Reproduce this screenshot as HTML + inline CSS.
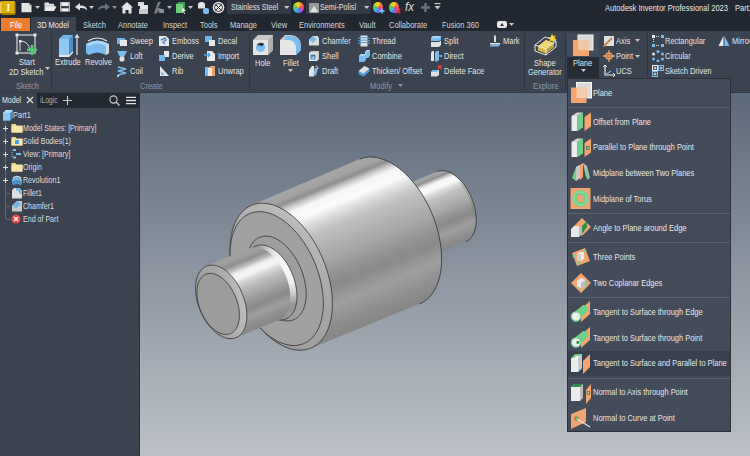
<!DOCTYPE html>
<html><head><meta charset="utf-8"><style>
html,body{margin:0;padding:0;width:750px;height:456px;overflow:hidden;background:#222832;}
.r{position:absolute;display:block;}
.t{position:absolute;white-space:nowrap;line-height:12px;height:12px;transform-origin:0 50%;font-family:"Liberation Sans",sans-serif;}
</style></head><body>
<div class="r" style="left:0px;top:0px;width:750px;height:31px;background:#222832;"></div>
<div class="r" style="left:0px;top:31px;width:750px;height:61px;background:#3b4351;"></div>
<div class="r" style="left:0px;top:92px;width:750px;height:1px;background:#343a45;"></div>
<div class="r" style="left:140px;top:93px;width:610px;height:363px;background:linear-gradient(#5d6a7b,#bcc1c7);"></div>
<div class="r" style="left:0px;top:93px;width:139px;height:363px;background:#3b4351;"></div>
<div class="r" style="left:139px;top:93px;width:1px;height:363px;background:#2a3039;"></div>
<div class="r" style="left:0px;top:93px;width:139px;height:15px;background:#232932;"></div>
<div class="r" style="left:0px;top:93px;width:37px;height:15px;background:#3b4351;"></div>
<svg class="r" style="left:0px;top:0px" width="16" height="16" viewBox="0 0 16 16"><rect x="0" y="1.5" width="2.5" height="12" fill="#e6c850"/><rect x="2" y="13" width="13" height="2" fill="#9a7c00"/><rect x="14.5" y="2" width="1" height="12" fill="#a88800"/><rect x="2.2" y="1" width="12.5" height="12.2" fill="#dcb000"/><text x="8.4" y="10.6" font-size="9.5" font-weight="bold" fill="#fff" text-anchor="middle" font-family="Liberation Serif">I</text></svg>
<svg class="r" style="left:20px;top:1px" width="13" height="13" viewBox="0 0 13 13"><path d="M1.5,2 h7.5 l2.5,2.5 v6.8 h-10z" fill="#e4e4e4"/><path d="M9,2 v2.5 h2.5z" fill="#9a9a9a"/></svg>
<svg class="r" style="left:35.0px;top:5.5px" width="5" height="3"><path d="M0,0 H5 L2.5,3z" fill="#c8c8c8"/></svg>
<svg class="r" style="left:43px;top:1px" width="14" height="13" viewBox="0 0 14 13"><path d="M1.5,1.5 h4 l1,1.2 h4.5 v2 h-9.5z" fill="#e2e2e2"/><path d="M1.5,10 v-5.5 h10.5 l-1.5,5.5z" fill="#d8d8d8"/><path d="M1.5,10 l2,-4.5 h10 l-2.5,4.5z" fill="#ececec"/></svg>
<svg class="r" style="left:59px;top:1px" width="12" height="12" viewBox="0 0 12 12"><rect x="1" y="1" width="10" height="9.6" fill="#b4b4b4"/><rect x="3" y="1.6" width="6" height="3.2" fill="#f0f0f0"/><rect x="2.2" y="5.2" width="7.6" height="2" fill="#30353e"/><rect x="3" y="7.6" width="6" height="2.6" fill="#f0f0f0"/></svg>
<svg class="r" style="left:74px;top:1px" width="14" height="13" viewBox="0 0 14 13"><path d="M1,6 l5,-4 v2.5 c4,0 7,1 7,5 c-1.5,-2 -3.5,-2.5 -7,-2.5 v2.5z" fill="#e0e0e0"/></svg>
<svg class="r" style="left:88.8px;top:5.5px" width="5" height="3"><path d="M0,0 H5 L2.5,3z" fill="#c8c8c8"/></svg>
<svg class="r" style="left:97px;top:1px" width="14" height="13" viewBox="0 0 14 13"><path d="M13,6 l-5,-4 v2.5 c-4,0 -7,1 -7,5 c1.5,-2 3.5,-2.5 7,-2.5 v2.5z" fill="#6a6f76"/></svg>
<svg class="r" style="left:112.0px;top:5.5px" width="5" height="3"><path d="M0,0 H5 L2.5,3z" fill="#8a8f96"/></svg>
<svg class="r" style="left:121px;top:1px" width="12" height="13" viewBox="0 0 12 13"><path d="M6,1 l6,5.5 h-1.5 v6 h-3 v-3.5 h-3 v3.5 h-3 v-6 h-1.5z" fill="#e4e4e4"/></svg>
<svg class="r" style="left:137px;top:1px" width="12" height="13" viewBox="0 0 12 13"><rect x="1" y="1" width="6" height="4" fill="#d8d8d8"/><rect x="3" y="4" width="8" height="5" fill="#e8e8e8"/><rect x="2" y="8" width="9" height="5" fill="#c8c8c8"/></svg>
<svg class="r" style="left:152px;top:1px" width="12" height="13" viewBox="0 0 12 13"><path d="M2,12 l4,-11 h3 l-3,6 h3 l-5,6z" fill="#777b82"/><rect x="7" y="8" width="5" height="4" fill="#8a8e94"/></svg>
<svg class="r" style="left:166.5px;top:5.5px" width="5" height="3"><path d="M0,0 H5 L2.5,3z" fill="#b8bcc2"/></svg>
<svg class="r" style="left:174px;top:1px" width="13" height="13" viewBox="0 0 13 13"><path d="M2,3 l3,-2 h6 v9 l-3,2 h-6z" fill="#3c9a4c"/><rect x="2" y="3" width="7" height="9" fill="#6ccf7a"/><path d="M8,6 l4,4 l-2,0 l1,3 l-1,0 l-1,-3 l-1,1z" fill="#e8e8e8"/></svg>
<svg class="r" style="left:188.2px;top:5.5px" width="5" height="3"><path d="M0,0 H5 L2.5,3z" fill="#c8c8c8"/></svg>
<svg class="r" style="left:197px;top:1px" width="13" height="13" viewBox="0 0 13 13"><ellipse cx="4.5" cy="3.5" rx="3.5" ry="2.5" fill="#e8e8e8"/><rect x="1" y="3.5" width="7" height="4" fill="#e0e0e0"/><rect x="6" y="7" width="6" height="6" rx="2" fill="#79bce8"/></svg>
<svg class="r" style="left:212px;top:1px" width="13" height="13" viewBox="0 0 13 13"><circle cx="6.5" cy="6.5" r="5.8" fill="#e8e8e8"/><circle cx="6.5" cy="6.5" r="4" fill="none" stroke="#333" stroke-width="1"/><path d="M3.5,3.5 L9.5,9.5 M9.5,3.5 L3.5,9.5" stroke="#333" stroke-width="1"/></svg>
<div class="r" style="left:227px;top:0px;width:64px;height:14px;background:#333a46;"></div>
<div class="t" style="left:231.0px;top:1.3px;font-size:9px;transform:scaleX(0.79);color:#e0e0e0;">Stainless Steel</div>
<svg class="r" style="left:283.9px;top:5.5px" width="5.5" height="3"><path d="M0,0 H5.5 L2.75,3z" fill="#c8c8c8"/></svg>
<div class="r" style="left:292.5px;top:1.8px;width:11.5px;height:11.5px;background:conic-gradient(from 0deg,#f8d030,#f08838,#e84a6a,#a850e0,#4f7ff0,#40c0d0,#50c060,#b8d830,#f8d030);border-radius:50%;"></div>
<div class="r" style="left:306px;top:0px;width:65px;height:14px;background:#333a46;"></div>
<svg class="r" style="left:309px;top:3px" width="10" height="10" viewBox="0 0 10 10"><rect x="0" y="0" width="10" height="10" rx="1" fill="#9a9a9a"/><path d="M1,9 l4,-6 l4,6z" fill="#e0e0e0"/></svg>
<div class="t" style="left:320.0px;top:1.3px;font-size:9px;transform:scaleX(0.8);color:#e0e0e0;">Semi-Polisl</div>
<svg class="r" style="left:364.2px;top:5.5px" width="5.5" height="3"><path d="M0,0 H5.5 L2.75,3z" fill="#c8c8c8"/></svg>
<div class="r" style="left:372.5px;top:2px;width:10.5px;height:10.5px;background:conic-gradient(from 0deg,#f8d030,#f08838,#e84a6a,#a850e0,#4f7ff0,#40c0d0,#50c060,#b8d830,#f8d030);border-radius:50%;"></div>
<svg class="r" style="left:379px;top:8px" width="6" height="6" viewBox="0 0 6 6"><path d="M0.5,3 h5 M3,0.5 v5" stroke="#7fd0ff" stroke-width="1.4"/></svg>
<div class="r" style="left:388.5px;top:2px;width:10.5px;height:10.5px;background:conic-gradient(from 0deg,#f8d030,#f08838,#e84a6a,#a850e0,#4f7ff0,#40c0d0,#50c060,#b8d830,#f8d030);border-radius:50%;"></div>
<svg class="r" style="left:395px;top:8px" width="6" height="6" viewBox="0 0 6 6"><path d="M0.8,0.8 l4.4,4.4 M5.2,0.8 l-4.4,4.4" stroke="#ff3a3a" stroke-width="1.4"/></svg>
<div class="t" style="left:404.5px;top:1.2px;font-size:12px;transform:scaleX(0.95);color:#dcdcdc;font-family:"Liberation Serif",serif;"><i>fx</i></div>
<svg class="r" style="left:420px;top:2px" width="11" height="11" viewBox="0 0 11 11"><path d="M5.5,1 v9 M1,5.5 h9" stroke="#6a6f76" stroke-width="2.5"/></svg>
<svg class="r" style="left:434px;top:3px" width="7" height="8" viewBox="0 0 7 8"><rect x="0.5" y="0" width="6" height="1.2" fill="#c8c8c8"/><path d="M0.5,3 h6 l-3,3.5z" fill="#c8c8c8"/></svg>
<div class="t" style="left:604.5px;top:2.0px;font-size:8.8px;transform:scaleX(0.855);color:#e8e8e8;">Autodesk Inventor Professional 2023</div>
<div class="t" style="left:734.5px;top:2.0px;font-size:8.8px;transform:scaleX(0.855);color:#e8e8e8;">Part1</div>
<div class="r" style="left:1px;top:18px;width:29px;height:13px;background:#ea7d2c;"></div>
<div class="t" style="left:9.5px;top:18.5px;font-size:9.0px;transform:scaleX(0.83);color:#ffffff;">File</div>
<div class="r" style="left:31px;top:17px;width:45px;height:14px;background:#3b4351;"></div>
<div class="t" style="left:36.7px;top:18.5px;font-size:9.0px;transform:scaleX(0.83);color:#eaeaea;">3D Model</div>
<div class="t" style="left:82.7px;top:18.5px;font-size:9.0px;transform:scaleX(0.83);color:#d2d4d8;">Sketch</div>
<div class="t" style="left:118.3px;top:18.5px;font-size:9.0px;transform:scaleX(0.83);color:#d2d4d8;">Annotate</div>
<div class="t" style="left:162.7px;top:18.5px;font-size:9.0px;transform:scaleX(0.83);color:#d2d4d8;">Inspect</div>
<div class="t" style="left:200.0px;top:18.5px;font-size:9.0px;transform:scaleX(0.83);color:#d2d4d8;">Tools</div>
<div class="t" style="left:230.0px;top:18.5px;font-size:9.0px;transform:scaleX(0.83);color:#d2d4d8;">Manage</div>
<div class="t" style="left:270.7px;top:18.5px;font-size:9.0px;transform:scaleX(0.83);color:#d2d4d8;">View</div>
<div class="t" style="left:299.3px;top:18.5px;font-size:9.0px;transform:scaleX(0.83);color:#d2d4d8;">Environments</div>
<div class="t" style="left:359.3px;top:18.5px;font-size:9.0px;transform:scaleX(0.83);color:#d2d4d8;">Vault</div>
<div class="t" style="left:389.3px;top:18.5px;font-size:9.0px;transform:scaleX(0.83);color:#d2d4d8;">Collaborate</div>
<div class="t" style="left:441.7px;top:18.5px;font-size:9.0px;transform:scaleX(0.83);color:#d2d4d8;">Fusion 360</div>
<svg class="r" style="left:497px;top:21px" width="10" height="7" viewBox="0 0 10 7"><rect x="0" y="0" width="10" height="7" rx="2" fill="#e8e8e8"/><path d="M3,5 l2,-3 l2,3z" fill="#333"/></svg>
<svg class="r" style="left:508.5px;top:23.1px" width="5" height="3"><path d="M0,0 H5 L2.5,3z" fill="#c8c8c8"/></svg>
<div class="r" style="left:51px;top:33px;width:1px;height:57px;background:#2e3440;"></div>
<div class="r" style="left:249px;top:33px;width:1px;height:57px;background:#2e3440;"></div>
<div class="r" style="left:524px;top:33px;width:1px;height:57px;background:#2e3440;"></div>
<div class="r" style="left:565px;top:33px;width:1px;height:57px;background:#2e3440;"></div>
<div class="r" style="left:647px;top:33px;width:1px;height:57px;background:#2e3440;"></div>
<div class="t" style="left:15.6px;top:79.5px;font-size:9.0px;transform:scaleX(0.83);color:#9097a0;">Sketch</div>
<div class="t" style="left:139.8px;top:79.5px;font-size:9.0px;transform:scaleX(0.83);color:#9097a0;">Create</div>
<div class="t" style="left:370.4px;top:79.5px;font-size:9.0px;transform:scaleX(0.83);color:#9097a0;">Modify</div>
<svg class="r" style="left:398.0px;top:84.0px" width="5" height="3"><path d="M0,0 H5 L2.5,3z" fill="#9097a0"/></svg>
<div class="t" style="left:532.8px;top:79.5px;font-size:9.0px;transform:scaleX(0.83);color:#9097a0;">Explore</div>
<svg class="r" style="left:15px;top:33px" width="24" height="23" viewBox="0 0 24 23"><rect x="2" y="2" width="18" height="18" fill="none" stroke="#d8d8d8" stroke-width="1.2"/><path d="M5,18 v-10 q9,0 10,10" fill="none" stroke="#d8d8d8" stroke-width="1"/><g fill="#e8e8e8"><rect x="0.5" y="0.5" width="3" height="3"/><rect x="18.5" y="0.5" width="3" height="3"/><rect x="0.5" y="18.5" width="3" height="3"/><rect x="4" y="7" width="2.5" height="2.5"/></g><path d="M17,12 v10 M12,17 h10" stroke="#4fd070" stroke-width="2.6"/></svg>
<div class="t" style="left:19.1px;top:56.4px;font-size:9.0px;transform:scaleX(0.83);color:#e4e4e4;">Start</div>
<div class="t" style="left:9.3px;top:66.0px;font-size:9.0px;transform:scaleX(0.83);color:#e4e4e4;">2D Sketch</div>
<svg class="r" style="left:44.5px;top:66.5px" width="5" height="3"><path d="M0,0 H5 L2.5,3z" fill="#c8c8c8"/></svg>
<svg class="r" style="left:57px;top:33px" width="24" height="24" viewBox="0 0 24 24"><path d="M2,6 l4,-4 h10 v16 l-4,4 h-10z" fill="#6fb5e8"/><path d="M2,6 h10 v16 h-10z" fill="#8fcaf5"/><path d="M12,6 l4,-4 v16 l-4,4z" fill="#4d90c8"/><path d="M2,22 h10 l4,-4 v2 l-4,4 h-10z" fill="#e8e8e8"/><path d="M20,22 v-19 M18,5 l2,-3 l2,3" stroke="#e8e8e8" stroke-width="1.2" fill="none"/></svg>
<div class="t" style="left:55.1px;top:56.4px;font-size:9.0px;transform:scaleX(0.83);color:#e4e4e4;">Extrude</div>
<svg class="r" style="left:85px;top:34px" width="25" height="22" viewBox="0 0 25 22"><path d="M3,7 q9.5,-6 19,0" fill="none" stroke="#e8e8e8" stroke-width="1.2"/><path d="M1,10 q11.5,-7 23,0 v9 l-3,2 q-9,-5 -17,0 l-3,-2z" fill="#79bdf0"/><path d="M21,10 l3,0 v9 l-3,2z" fill="#d8d8d8"/><path d="M1,10 q11.5,-7 23,0 l-3,2 q-8.5,-5 -17,0z" fill="#a8d8fa"/></svg>
<div class="t" style="left:84.5px;top:56.4px;font-size:9.0px;transform:scaleX(0.83);color:#e4e4e4;">Revolve</div>
<svg class="r" style="left:115.5px;top:34.7px" width="12" height="12" viewBox="0 0 12 12"><path d="M1,3 h7 l2,2 v4 h-9z" fill="#6fb5e8"/><rect x="4" y="5" width="7" height="6" fill="#e8e8e8"/></svg>
<div class="t" style="left:130.0px;top:34.7px;font-size:9.0px;transform:scaleX(0.83);color:#e4e4e4;">Sweep</div>
<svg class="r" style="left:115.5px;top:50px" width="12" height="12" viewBox="0 0 12 12"><path d="M1,1 h10 l-3,6 h-4z" fill="#79bdf0"/><circle cx="6" cy="9" r="2.6" fill="#e0e0e0"/></svg>
<div class="t" style="left:130.0px;top:50.0px;font-size:9.0px;transform:scaleX(0.83);color:#e4e4e4;">Loft</div>
<svg class="r" style="left:115.5px;top:65.3px" width="12" height="12" viewBox="0 0 12 12"><path d="M2,2 l8,2 l-8,2 l8,2 l-8,2" fill="none" stroke="#79bdf0" stroke-width="1.6"/><circle cx="2" cy="11" r="1" fill="#e8e8e8"/></svg>
<div class="t" style="left:130.0px;top:65.3px;font-size:9.0px;transform:scaleX(0.83);color:#e4e4e4;">Coil</div>
<svg class="r" style="left:157.5px;top:34.7px" width="12" height="12" viewBox="0 0 12 12"><path d="M1,1 h7 l3,3 v7 h-10z" fill="#e8e8e8"/><path d="M3,5 l4,-2 l1,2 l-3,2 l2,2" fill="none" stroke="#3a8ad8" stroke-width="1.4"/></svg>
<div class="t" style="left:171.6px;top:34.7px;font-size:9.0px;transform:scaleX(0.83);color:#e4e4e4;">Emboss</div>
<svg class="r" style="left:157.5px;top:50px" width="12" height="12" viewBox="0 0 12 12"><rect x="6" y="1" width="5" height="6" fill="#e8e8e8"/><rect x="1" y="5" width="6" height="6" fill="#6fb5e8"/></svg>
<div class="t" style="left:171.6px;top:50.0px;font-size:9.0px;transform:scaleX(0.83);color:#e4e4e4;">Derive</div>
<svg class="r" style="left:157.5px;top:65.3px" width="12" height="12" viewBox="0 0 12 12"><path d="M2,1 v10 h9z" fill="#e8e8e8"/><path d="M3,6 l4,4 h-4z" fill="#79bdf0"/></svg>
<div class="t" style="left:171.6px;top:65.3px;font-size:9.0px;transform:scaleX(0.83);color:#e4e4e4;">Rib</div>
<svg class="r" style="left:204px;top:34.7px" width="12" height="12" viewBox="0 0 12 12"><rect x="1" y="1" width="7" height="6" fill="#6fb5e8"/><rect x="5" y="5" width="6" height="6" fill="#e8e8e8"/></svg>
<div class="t" style="left:218.0px;top:34.7px;font-size:9.0px;transform:scaleX(0.83);color:#e4e4e4;">Decal</div>
<svg class="r" style="left:204px;top:50px" width="12" height="12" viewBox="0 0 12 12"><path d="M3,1 h5 l3,3 v7 h-8z" fill="#e8e8e8"/><path d="M0,5 h6 M4,3 l2,2 l-2,2" stroke="#4aa8e8" stroke-width="1.3" fill="none"/></svg>
<div class="t" style="left:218.0px;top:50.0px;font-size:9.0px;transform:scaleX(0.83);color:#e4e4e4;">Import</div>
<svg class="r" style="left:204px;top:65.3px" width="12" height="12" viewBox="0 0 12 12"><rect x="1" y="2" width="5" height="9" fill="#79bdf0"/><rect x="6" y="1" width="5" height="10" fill="#f0a060"/><rect x="4" y="3" width="4" height="8" fill="#e8e8e8"/></svg>
<div class="t" style="left:218.0px;top:65.3px;font-size:9.0px;transform:scaleX(0.83);color:#e4e4e4;">Unwrap</div>
<svg class="r" style="left:252px;top:34px" width="22" height="22" viewBox="0 0 22 22"><path d="M1,6 l5,-5 h15 v15 l-5,5 h-15z" fill="#c8c8c8"/><path d="M1,6 h15 v15 h-15z" fill="#e6e6e6"/><path d="M16,6 l5,-5 v15 l-5,5z" fill="#b0b0b0"/><ellipse cx="8.5" cy="13.5" rx="4.6" ry="4.6" fill="#79bdf0"/><path d="M5,11 a4.6,4.6 0 0 1 7,-1 l-1.5,2z" fill="#2a2f36"/></svg>
<div class="t" style="left:255.3px;top:56.5px;font-size:9.0px;transform:scaleX(0.83);color:#e4e4e4;">Hole</div>
<svg class="r" style="left:279px;top:34px" width="23" height="22" viewBox="0 0 23 22"><path d="M1,6 l5,-5 h6 a10,10 0 0 1 10,10 v5 l-5,5 h-16z" fill="#c8c8c8"/><path d="M1,6 h9 a7,7 0 0 1 7,7 v8 h-16z" fill="#e6e6e6"/><path d="M7,2 h5 a10,10 0 0 1 10,10 v4 l-5,5 v-8 a7,7 0 0 0 -7,-7 h-4z" fill="#79bdf0"/></svg>
<div class="t" style="left:282.5px;top:56.5px;font-size:9.0px;transform:scaleX(0.83);color:#e4e4e4;">Fillet</div>
<svg class="r" style="left:287.9px;top:69.0px" width="5" height="3"><path d="M0,0 H5 L2.5,3z" fill="#c8c8c8"/></svg>
<svg class="r" style="left:308px;top:34.7px" width="12" height="12" viewBox="0 0 12 12"><path d="M1,4.5 l4,-3.5 h5 v1 l1,1 v7.5 h-10z" fill="#dcdcdc"/><path d="M1,4.5 l4,-3.5 l4,3 l-4,4z" fill="#79bdf0"/></svg>
<div class="t" style="left:322.0px;top:34.7px;font-size:9.0px;transform:scaleX(0.83);color:#e4e4e4;">Chamfer</div>
<svg class="r" style="left:308px;top:50px" width="12" height="12" viewBox="0 0 12 12"><path d="M1,3 l2,-2 h8 v8 l-2,2 h-8z" fill="#d0d0d0"/><rect x="1" y="3" width="8" height="8" fill="#e8e8e8"/><rect x="2.5" y="4.5" width="5" height="5" fill="#3a78b8"/><rect x="3.5" y="6.5" width="3" height="3" fill="#8fcaf5"/></svg>
<div class="t" style="left:322.0px;top:50.0px;font-size:9.0px;transform:scaleX(0.83);color:#e4e4e4;">Shell</div>
<svg class="r" style="left:308px;top:65.3px" width="12" height="12" viewBox="0 0 12 12"><path d="M1,5 l3,-4 h2 v10.5 h-5z" fill="#e4e4e4"/><path d="M5,10.5 l2,-8 l3,1 l-2,7z" fill="#79bdf0"/><path d="M8,0.5 l2.5,3" stroke="#e4e4e4" stroke-width="1"/></svg>
<div class="t" style="left:322.0px;top:65.3px;font-size:9.0px;transform:scaleX(0.83);color:#e4e4e4;">Draft</div>
<svg class="r" style="left:358.4px;top:34.7px" width="12" height="12" viewBox="0 0 12 12"><rect x="2.5" y="0.5" width="7" height="11" fill="#e4e4e4"/><path d="M0,3.5 q6,-2 12,0 M0,6 q6,-2 12,0 M0,8.5 q6,-2 12,0" stroke="#4a9ee0" stroke-width="1.2" fill="none"/></svg>
<div class="t" style="left:372.0px;top:34.7px;font-size:9.0px;transform:scaleX(0.83);color:#e4e4e4;">Thread</div>
<svg class="r" style="left:358.4px;top:50px" width="12" height="12" viewBox="0 0 12 12"><path d="M1,6 l2,-2 h4 v-2 l2,-2 h3 v6 l-2,2 h-2 v2 l-2,2 h-5z" fill="#79bdf0"/><path d="M3,4 h4 v-2 l2,-2 h3 l-2,2 h-2 v2 l-2,2 h-5z" fill="#a8d8fa"/></svg>
<div class="t" style="left:372.0px;top:50.0px;font-size:9.0px;transform:scaleX(0.83);color:#e4e4e4;">Combine</div>
<svg class="r" style="left:358.4px;top:65.3px" width="12" height="12" viewBox="0 0 12 12"><path d="M0.5,7 l6,-5 l5,2.5 v2 l-6,5 l-5,-2.5z" fill="#4d9fdc"/><path d="M0.5,6 l6,-5 l5,2.5 l-6,5z" fill="#e0e0e0"/></svg>
<div class="t" style="left:372.0px;top:65.3px;font-size:9.0px;transform:scaleX(0.83);color:#e4e4e4;">Thicken/ Offset</div>
<svg class="r" style="left:430.4px;top:34.7px" width="12" height="12" viewBox="0 0 12 12"><path d="M1,3 l2,-2 h8 v3.5 l-2,1.5 h-8z" fill="#79bdf0"/><path d="M1,3 l2,-2 h8 l-2,2z" fill="#a8d8fa"/><path d="M1,7 h8 l2,-1.5 v4.5 l-2,2 h-8z" fill="#e4e4e4"/></svg>
<div class="t" style="left:443.6px;top:34.7px;font-size:9.0px;transform:scaleX(0.83);color:#e4e4e4;">Split</div>
<svg class="r" style="left:430.4px;top:50px" width="12" height="12" viewBox="0 0 12 12"><path d="M1,11 v-8 q0,-2 2,-2 h1 v10z" fill="#e4e4e4"/><path d="M5,2 l2,-1 h2 v9 l-2,1.5 h-2z" fill="#79bdf0"/><path d="M9.5,6 h2.5" stroke="#e4e4e4" stroke-width="1.3"/></svg>
<div class="t" style="left:443.6px;top:50.0px;font-size:9.0px;transform:scaleX(0.83);color:#e4e4e4;">Direct</div>
<svg class="r" style="left:430.4px;top:65.3px" width="12" height="12" viewBox="0 0 12 12"><path d="M1,7 l2,-2 h6 v5 l-2,1.5 h-6z" fill="#e0e0e0"/><path d="M1,7 l2,-2 h6 l-2,2z" fill="#79bdf0"/><path d="M8,0.5 l3.5,3.5 M11.5,0.5 l-3.5,3.5" stroke="#ff4040" stroke-width="1.3"/></svg>
<div class="t" style="left:443.6px;top:65.3px;font-size:9.0px;transform:scaleX(0.83);color:#e4e4e4;">Delete Face</div>
<svg class="r" style="left:488.5px;top:34.7px" width="12" height="12" viewBox="0 0 12 12"><path d="M6,0.5 v6.5" stroke="#e8e8e8" stroke-width="1.8"/><path d="M1,8 h10 v1.5 h-10z" fill="#e8e8e8"/><path d="M0.5,11.5 l2,-2 h9 l-2,2z" fill="#79bdf0"/></svg>
<div class="t" style="left:502.6px;top:34.7px;font-size:9.0px;transform:scaleX(0.83);color:#e4e4e4;">Mark</div>
<svg class="r" style="left:533px;top:33px" width="24" height="23" viewBox="0 0 24 23"><path d="M5,13 l8,-6 l8,3 v4 l-8,6.5 l-8,-3z" fill="#d8b840"/><path d="M5,13 l8,-6 l8,3 l-8,6z" fill="#ecd470"/><path d="M13,16 l8,-6 v4 l-8,6.5z" fill="#c0a030"/><path d="M2,12 l10,-8 l11,4 v6 l-10,8 l-11,-4z M2,12 l11,4 l10,-8 M13,16 v6" fill="none" stroke="#e8e8e8" stroke-width="1"/><path d="M19,0.5 l1.2,2.8 l2.8,-1 l-1.6,2.5 l2.4,1.8 l-3,0.3 l-0.2,3 l-1.6,-2.5 l-2.6,1.4 l1,-2.8 l-2.6,-1.5 l3,-0.4z" fill="#ffd83a"/></svg>
<div class="t" style="left:534.2px;top:56.5px;font-size:9.0px;transform:scaleX(0.83);color:#e4e4e4;">Shape</div>
<div class="t" style="left:528.2px;top:66.2px;font-size:9.0px;transform:scaleX(0.83);color:#e4e4e4;">Generator</div>
<div class="r" style="left:566.7px;top:32.7px;width:32.6px;height:24.3px;background:#434b59;"></div>
<div class="r" style="left:566.7px;top:57px;width:32.6px;height:21.5px;background:#262c36;"></div>
<svg class="r" style="left:572px;top:34px" width="23" height="23" viewBox="0 0 23 23"><rect x="6" y="1" width="15" height="15" fill="#d9d9d9"/><rect x="6" y="1" width="15" height="15" fill="none" stroke="#f4f4f4" stroke-width="1"/><rect x="1" y="6" width="16" height="16" fill="#f2a56f"/><rect x="6" y="6" width="11" height="10" fill="#f0c8a6"/></svg>
<div class="t" style="left:573.4px;top:56.5px;font-size:9.0px;transform:scaleX(0.83);color:#e4e4e4;">Plane</div>
<svg class="r" style="left:580.5px;top:69.0px" width="5" height="3"><path d="M0,0 H5 L2.5,3z" fill="#c8c8c8"/></svg>
<svg class="r" style="left:603px;top:34.7px" width="12" height="12" viewBox="0 0 12 12"><rect x="1" y="1" width="10" height="10" fill="#e0e0e0"/><path d="M0,12 l9,-9" stroke="#c88050" stroke-width="1.8"/></svg>
<div class="t" style="left:616.0px;top:34.7px;font-size:9.0px;transform:scaleX(0.83);color:#e4e4e4;">Axis</div>
<svg class="r" style="left:635.0px;top:39.2px" width="5" height="3"><path d="M0,0 H5 L2.5,3z" fill="#c8c8c8"/></svg>
<svg class="r" style="left:603px;top:50px" width="12" height="12" viewBox="0 0 12 12"><path d="M6,0 v12 M0,6 h12" stroke="#f0a060" stroke-width="1.3"/><circle cx="6" cy="6" r="3" fill="none" stroke="#f0a060" stroke-width="1.6"/></svg>
<div class="t" style="left:616.0px;top:50.0px;font-size:9.0px;transform:scaleX(0.83);color:#e4e4e4;">Point</div>
<svg class="r" style="left:635.0px;top:54.5px" width="5" height="3"><path d="M0,0 H5 L2.5,3z" fill="#c8c8c8"/></svg>
<svg class="r" style="left:603px;top:65.3px" width="12" height="12" viewBox="0 0 12 12"><path d="M2,0 v10 h10" stroke="#e8e8e8" stroke-width="1.2" fill="none"/><path d="M2,10 l6,-4" stroke="#79bdf0" stroke-width="1.2"/><path d="M0,2 l2,-2 l2,2 M10,8 l2,2 l-2,2" stroke="#e8e8e8" fill="none"/></svg>
<div class="t" style="left:616.0px;top:65.3px;font-size:9.0px;transform:scaleX(0.83);color:#e4e4e4;">UCS</div>
<svg class="r" style="left:652px;top:34.7px" width="12" height="12" viewBox="0 0 12 12"><g fill="#79bdf0"><rect x="0" y="0" width="3" height="3"/><rect x="9" y="0" width="3" height="3"/><rect x="0" y="9" width="3" height="3"/><rect x="9" y="9" width="3" height="3"/></g><rect x="0" y="0" width="3" height="3" fill="#e8e8e8"/><path d="M4,1.5 h4 M4,10.5 h4 M1.5,4 v4" stroke="#e8e8e8" stroke-dasharray="1,1"/></svg>
<div class="t" style="left:665.3px;top:34.7px;font-size:9.0px;transform:scaleX(0.83);color:#e4e4e4;">Rectangular</div>
<svg class="r" style="left:652px;top:50px" width="12" height="12" viewBox="0 0 12 12"><g fill="#79bdf0"><circle cx="6" cy="1.5" r="1.5"/><circle cx="10.5" cy="4" r="1.5"/><circle cx="10.5" cy="9" r="1.5"/><circle cx="6" cy="11" r="1.5"/><circle cx="1.5" cy="9" r="1.5"/></g><circle cx="1.5" cy="4" r="1.5" fill="#e8e8e8"/></svg>
<div class="t" style="left:665.3px;top:50.0px;font-size:9.0px;transform:scaleX(0.83);color:#e4e4e4;">Circular</div>
<svg class="r" style="left:652px;top:65.3px" width="12" height="12" viewBox="0 0 12 12"><rect x="0.5" y="0.5" width="5" height="5" fill="none" stroke="#e8e8e8"/><rect x="6.5" y="0.5" width="5" height="5" fill="none" stroke="#79bdf0"/><rect x="0.5" y="6.5" width="5" height="5" fill="none" stroke="#79bdf0"/><path d="M3,1.5 v3 M1.5,3 h3 M9,1.5 v3 M7.5,3 h3 M3,7.5 v3 M1.5,9 h3" stroke="#e8e8e8"/></svg>
<div class="t" style="left:665.3px;top:65.3px;font-size:9.0px;transform:scaleX(0.83);color:#e4e4e4;">Sketch Driven</div>
<svg class="r" style="left:717.5px;top:34.7px" width="12" height="12" viewBox="0 0 12 12"><path d="M5.5,1 v10 h-5z" fill="#e8e8e8"/><path d="M6.5,1 v10 h5z" fill="#79bdf0"/></svg>
<div class="t" style="left:731.7px;top:34.7px;font-size:9.0px;transform:scaleX(0.83);color:#e4e4e4;">Mirror</div>
<div class="t" style="left:2.0px;top:94.4px;font-size:9.0px;transform:scaleX(0.78);color:#e8e8e8;">Model</div>
<svg class="r" style="left:26px;top:96px" width="8" height="8" viewBox="0 0 8 8"><path d="M1,1 l6,6 M7,1 l-6,6" stroke="#e0e0e0" stroke-width="1.2"/></svg>
<div class="t" style="left:39.6px;top:94.4px;font-size:9.0px;transform:scaleX(0.75);color:#aab0b8;">iLogic</div>
<svg class="r" style="left:63px;top:96px" width="9" height="9" viewBox="0 0 9 9"><path d="M4.5,0 v9 M0,4.5 h9" stroke="#c8c8c8" stroke-width="1.2"/></svg>
<svg class="r" style="left:109px;top:95px" width="11" height="11" viewBox="0 0 11 11"><circle cx="4.5" cy="4.5" r="3.6" fill="none" stroke="#d0d0d0" stroke-width="1.1"/><path d="M7,7 l3.5,3.5" stroke="#d0d0d0" stroke-width="1.3"/></svg>
<svg class="r" style="left:126px;top:96px" width="10" height="9" viewBox="0 0 10 9"><path d="M0,1.3 h10 M0,4.5 h10 M0,7.7 h10" stroke="#e0e0e0" stroke-width="1.3"/></svg>
<div class="r" style="left:5px;top:120px;width:1px;height:99px;background:#5f6670;"></div>
<div class="r" style="left:6px;top:193px;width:4px;height:1px;background:#5f6670;"></div>
<div class="r" style="left:6px;top:206px;width:4px;height:1px;background:#5f6670;"></div>
<div class="r" style="left:6px;top:219px;width:4px;height:1px;background:#5f6670;"></div>
<svg class="r" style="left:2px;top:109px" width="12" height="12" viewBox="0 0 12 12"><path d="M1,4 l3,-3 h7 v7.5 l-3,3 h-7z" fill="#5aa8e0"/><path d="M1,4 h7 v7.5 h-7z" fill="#8fcaf5"/><path d="M8,4 l3,-3 v7.5 l-3,3z" fill="#4d90c8"/><path d="M1,4 l3,-3 h7 l-3,3z" fill="#b5dcf8"/></svg>
<div class="t" style="left:12.7px;top:109.0px;font-size:9.0px;transform:scaleX(0.83);color:#dcdee2;">Part1</div>
<svg class="r" style="left:2px;top:125px" width="7" height="7" viewBox="0 0 7 7"><path d="M3.5,1 v5 M1,3.5 h5" stroke="#d8d8d8" stroke-width="1"/></svg>
<svg class="r" style="left:2px;top:138px" width="7" height="7" viewBox="0 0 7 7"><path d="M3.5,1 v5 M1,3.5 h5" stroke="#d8d8d8" stroke-width="1"/></svg>
<svg class="r" style="left:2px;top:151px" width="7" height="7" viewBox="0 0 7 7"><path d="M3.5,1 v5 M1,3.5 h5" stroke="#d8d8d8" stroke-width="1"/></svg>
<svg class="r" style="left:2px;top:164px" width="7" height="7" viewBox="0 0 7 7"><path d="M3.5,1 v5 M1,3.5 h5" stroke="#d8d8d8" stroke-width="1"/></svg>
<svg class="r" style="left:2px;top:177px" width="7" height="7" viewBox="0 0 7 7"><path d="M3.5,1 v5 M1,3.5 h5" stroke="#d8d8d8" stroke-width="1"/></svg>
<svg class="r" style="left:11px;top:123px" width="12" height="10" viewBox="0 0 12 10"><path d="M0.5,1 h4 l1,1.5 h6 v7 h-11z" fill="#f2dc8a"/><rect x="0.5" y="3" width="11" height="6.5" fill="#f7e6a4"/></svg>
<div class="t" style="left:23.3px;top:122.0px;font-size:9.0px;transform:scaleX(0.785);color:#dcdee2;">Model States: [Primary]</div>
<svg class="r" style="left:11px;top:136px" width="12" height="10" viewBox="0 0 12 10"><path d="M0.5,1 h4 l1,1.5 h6 v7 h-11z" fill="#f2dc8a"/><rect x="0.5" y="3" width="11" height="6.5" fill="#f7e6a4"/><rect x="4" y="4" width="4" height="4" fill="#4d9fdc"/></svg>
<div class="t" style="left:23.3px;top:135.0px;font-size:9.0px;transform:scaleX(0.785);color:#dcdee2;">Solid Bodies(1)</div>
<svg class="r" style="left:11px;top:149px" width="12" height="10" viewBox="0 0 12 10"><path d="M1,1 v8" stroke="#c8c8c8" stroke-width="0.8" stroke-dasharray="1,1"/><rect x="2" y="0" width="3" height="2" fill="#79bdf0"/><rect x="5" y="4" width="5" height="2" fill="#79bdf0"/><rect x="2" y="7.5" width="3" height="2" fill="#79bdf0"/></svg>
<div class="t" style="left:23.3px;top:148.0px;font-size:9.0px;transform:scaleX(0.785);color:#dcdee2;">View: [Primary]</div>
<svg class="r" style="left:11px;top:162px" width="12" height="10" viewBox="0 0 12 10"><path d="M0.5,1 h4 l1,1.5 h6 v7 h-11z" fill="#f2dc8a"/><rect x="0.5" y="3" width="11" height="6.5" fill="#f7e6a4"/></svg>
<div class="t" style="left:23.3px;top:161.0px;font-size:9.0px;transform:scaleX(0.785);color:#dcdee2;">Origin</div>
<svg class="r" style="left:11px;top:174px" width="12" height="12" viewBox="0 0 12 12"><path d="M1,5 q5,-4 10,0 v3 q-5,-3 -10,0z" fill="#6fb5e8"/><path d="M1,8 q5,-3 10,0 v2 l-1.5,1.5 q-3.5,-2.5 -7,0 l-1.5,-1.5z" fill="#4d90c8"/><path d="M2,4 q4,-3.5 8,0" stroke="#e0e0e0" stroke-width="1.2" fill="none"/></svg>
<div class="t" style="left:23.3px;top:174.0px;font-size:9.0px;transform:scaleX(0.785);color:#dcdee2;">Revolution1</div>
<svg class="r" style="left:11px;top:187px" width="12" height="12" viewBox="0 0 12 12"><path d="M1,11.5 v-7 q0,-3.5 3.5,-3.5 h2 q4.5,0 4.5,4.5 v6z" fill="#dedede"/><path d="M5,1 q6,0 6,6 h-2.5 q0,-3.5 -3.5,-3.5z" fill="#6fb5e8"/></svg>
<div class="t" style="left:23.3px;top:187.0px;font-size:9.0px;transform:scaleX(0.785);color:#dcdee2;">Fillet1</div>
<svg class="r" style="left:11px;top:200px" width="12" height="12" viewBox="0 0 12 12"><path d="M1,11.5 v-6 l5,-4.5 h5 v10.5z" fill="#c8c8c8"/><path d="M1,5.5 l5,-4.5 l4,3 l-5,4.5z" fill="#6fb5e8"/></svg>
<div class="t" style="left:23.3px;top:200.0px;font-size:9.0px;transform:scaleX(0.785);color:#dcdee2;">Chamfer1</div>
<svg class="r" style="left:11px;top:214px" width="10" height="10" viewBox="0 0 10 10"><circle cx="5" cy="5" r="4.6" fill="#e84848"/><path d="M3,3 l4,4 M7,3 l-4,4" stroke="#fff" stroke-width="1.3"/></svg>
<div class="t" style="left:23.3px;top:213.0px;font-size:9.0px;transform:scaleX(0.785);color:#dcdee2;">End of Part</div>
<svg class="r" style="left:140px;top:92px" width="610" height="364" viewBox="0 0 610 364"><defs><linearGradient id="gFl" gradientUnits="userSpaceOnUse" x1="240" y1="330" x2="320" y2="220"><stop offset="0" stop-color="#9c9c9c"/><stop offset="0.55" stop-color="#a6a6a6"/><stop offset="1" stop-color="#c2c2c2"/></linearGradient><linearGradient id="gCh" gradientUnits="userSpaceOnUse" x1="196" y1="300" x2="248" y2="290"><stop offset="0" stop-color="#9a9a9a"/><stop offset="0.5" stop-color="#a8a8a8"/><stop offset="1" stop-color="#c4c4c4"/></linearGradient><linearGradient id="gF" gradientUnits="userSpaceOnUse" x1="229.49" y1="256.58" x2="259.11" y2="328.09"><stop offset="0" stop-color="#a2a2a2"/><stop offset="0.06" stop-color="#9e9e9e"/><stop offset="0.12" stop-color="#8e8e8e"/><stop offset="0.18" stop-color="#b8b8b8"/><stop offset="0.235" stop-color="#f0f0f0"/><stop offset="0.3" stop-color="#f6f6f6"/><stop offset="0.36" stop-color="#d8d8d8"/><stop offset="0.45" stop-color="#bababa"/><stop offset="0.55" stop-color="#a8a8a8"/><stop offset="0.65" stop-color="#939393"/><stop offset="0.72" stop-color="#8a8a8a"/><stop offset="0.82" stop-color="#9e9e9e"/><stop offset="0.9" stop-color="#909090"/><stop offset="1" stop-color="#868686"/></linearGradient><linearGradient id="gB" gradientUnits="userSpaceOnUse" x1="302.48" y1="184.56" x2="361.65" y2="327.39"><stop offset="0" stop-color="#a6a6a6"/><stop offset="0.04" stop-color="#a2a2a2"/><stop offset="0.07" stop-color="#8e8e8e"/><stop offset="0.1" stop-color="#c4c4c4"/><stop offset="0.135" stop-color="#f6f6f6"/><stop offset="0.2" stop-color="#fafafa"/><stop offset="0.26" stop-color="#dadada"/><stop offset="0.33" stop-color="#c0c0c0"/><stop offset="0.42" stop-color="#b2b2b2"/><stop offset="0.5" stop-color="#a8a8a8"/><stop offset="0.6" stop-color="#949494"/><stop offset="0.68" stop-color="#8a8a8a"/><stop offset="0.8" stop-color="#9e9e9e"/><stop offset="0.9" stop-color="#909090"/><stop offset="1" stop-color="#868686"/></linearGradient><linearGradient id="gR" gradientUnits="userSpaceOnUse" x1="405.33" y1="184.61" x2="434.34" y2="254.64"><stop offset="0" stop-color="#a6a6a6"/><stop offset="0.04" stop-color="#a2a2a2"/><stop offset="0.07" stop-color="#8e8e8e"/><stop offset="0.1" stop-color="#c4c4c4"/><stop offset="0.135" stop-color="#f6f6f6"/><stop offset="0.2" stop-color="#fafafa"/><stop offset="0.26" stop-color="#dadada"/><stop offset="0.33" stop-color="#c0c0c0"/><stop offset="0.42" stop-color="#b2b2b2"/><stop offset="0.5" stop-color="#a8a8a8"/><stop offset="0.6" stop-color="#949494"/><stop offset="0.68" stop-color="#8a8a8a"/><stop offset="0.8" stop-color="#9e9e9e"/><stop offset="0.9" stop-color="#909090"/><stop offset="1" stop-color="#868686"/></linearGradient><radialGradient id="gC" gradientUnits="userSpaceOnUse" cx="290" cy="266" r="38"><stop offset="0" stop-color="#fafafa"/><stop offset="0.45" stop-color="#f0f0f0"/><stop offset="0.75" stop-color="#c8c8c8"/><stop offset="1" stop-color="#989898"/></radialGradient></defs><g transform="translate(-140,-92)"><path d="M402.65,267.76 L401.56,268.16 L400.43,268.46 L399.27,268.66 L398.07,268.76 L396.85,268.77 L395.61,268.67 L394.34,268.48 L393.06,268.19 L391.77,267.80 L390.46,267.32 L389.15,266.74 L387.84,266.06 L386.53,265.30 L385.22,264.45 L383.92,263.51 L382.63,262.48 L381.35,261.38 L380.10,260.19 L378.87,258.94 L377.66,257.60 L376.48,256.21 L375.33,254.74 L374.22,253.22 L373.15,251.64 L372.11,250.01 L371.12,248.33 L370.18,246.61 L369.29,244.85 L368.45,243.05 L367.66,241.23 L366.93,239.39 L366.26,237.53 L365.64,235.65 L365.09,233.77 L364.61,231.88 L364.18,230.00 L363.82,228.12 L363.53,226.26 L363.31,224.41 L363.15,222.59 L363.07,220.79 L363.05,219.03 L363.10,217.31 L363.22,215.62 L363.41,213.99 L363.66,212.41 L363.98,210.88 L364.37,209.41 L364.82,208.00 L365.34,206.67 L365.92,205.40 L366.56,204.21 L367.26,203.10 L368.02,202.07 L368.83,201.12 L369.70,200.26 L370.62,199.49 L371.58,198.81 L372.59,198.23 L373.64,197.73 L436.65,171.64 L437.74,171.24 L438.87,170.94 L440.03,170.74 L441.23,170.64 L442.45,170.63 L443.69,170.73 L444.95,170.92 L446.24,171.21 L447.53,171.60 L448.83,172.08 L450.15,172.66 L451.46,173.34 L452.77,174.10 L454.08,174.95 L455.38,175.89 L456.67,176.92 L457.95,178.02 L459.20,179.20 L460.43,180.46 L461.64,181.79 L462.82,183.19 L463.97,184.66 L465.08,186.18 L466.15,187.76 L467.19,189.39 L468.17,191.07 L469.12,192.79 L470.01,194.55 L470.85,196.34 L471.64,198.17 L472.37,200.01 L473.04,201.87 L473.65,203.75 L474.21,205.63 L474.69,207.52 L475.12,209.40 L475.47,211.28 L475.77,213.14 L475.99,214.99 L476.14,216.81 L476.23,218.60 L476.25,220.37 L476.20,222.09 L476.08,223.77 L475.89,225.41 L475.64,226.99 L475.32,228.52 L474.93,229.99 L474.47,231.40 L473.96,232.73 L473.38,234.00 L472.73,235.19 L472.03,236.30 L471.28,237.33 L470.46,238.28 L469.60,239.14 L468.68,239.91 L467.72,240.59 L466.71,241.17 L465.66,241.67 Z" fill="url(#gR)"/><path d="M436.65,171.64 L437.74,171.24 L438.87,170.94 L440.03,170.74 L441.23,170.64 L442.45,170.63 L443.69,170.73 L444.95,170.92 L446.24,171.21 L447.53,171.60 L448.83,172.08 L450.15,172.66 L451.46,173.34 L452.77,174.10 L454.08,174.95 L455.38,175.89 L456.67,176.92 L457.95,178.02 L459.20,179.20 L460.43,180.46 L461.64,181.79 L462.82,183.19 L463.97,184.66 L465.08,186.18 L466.15,187.76 L467.19,189.39 L468.17,191.07 L469.12,192.79 L470.01,194.55 L470.85,196.34 L471.64,198.17 L472.37,200.01 L473.04,201.87 L473.65,203.75 L474.21,205.63 L474.69,207.52 L475.12,209.40 L475.47,211.28 L475.77,213.14 L475.99,214.99 L476.14,216.81 L476.23,218.60 L476.25,220.37 L476.20,222.09 L476.08,223.77 L475.89,225.41 L475.64,226.99 L475.32,228.52 L474.93,229.99 L474.47,231.40 L473.96,232.73 L473.38,234.00 L472.73,235.19 L472.03,236.30 L471.28,237.33 L470.46,238.28 L469.60,239.14 L468.68,239.91 L467.72,240.59 L466.71,241.17 L465.66,241.67" stroke="#303030" stroke-width="0.8" fill="none"/><path d="M460.09,182.76 L460.48,183.21 L460.87,183.67 L461.25,184.14 L461.63,184.61 L462.01,185.09 L462.38,185.58 L462.75,186.07 L463.11,186.57 L463.47,187.08 L463.83,187.59 L464.18,188.11 L464.53,188.63 L464.87,189.16 L465.21,189.70 L465.55,190.24 L465.88,190.79 L466.20,191.34 L466.52,191.89 L466.83,192.45 L467.14,193.02 L467.45,193.59 L467.74,194.16 L468.04,194.74 L468.32,195.32 L468.61,195.90 L468.88,196.49 L469.15,197.08 L469.42,197.68 L469.68,198.27 L469.93,198.87 L470.17,199.48 L470.41,200.08 L470.65,200.69 L470.87,201.30 L471.09,201.91 L471.31,202.52 L471.52,203.14 L471.72,203.75 L471.91,204.37 L472.10,204.98 L472.28,205.60 L472.45,206.22 L472.62,206.84 L472.78,207.46 L472.93,208.08 L473.08,208.70 L473.22,209.31 L473.35,209.93 L473.48,210.55 L473.59,211.16 L473.70,211.78 L473.81,212.39 L473.90,213.00 L473.99,213.61 L474.07,214.22 L474.14,214.83 L474.21,215.43 L474.27,216.03 L474.32,216.63 L474.36,217.22" stroke="#666" stroke-width="0.4" fill="none"/><path d="M310.81,348.13 L308.58,348.93 L306.28,349.54 L303.91,349.95 L301.48,350.16 L298.99,350.17 L296.45,349.98 L293.87,349.58 L291.26,348.99 L288.62,348.20 L285.96,347.21 L283.28,346.03 L280.60,344.66 L277.93,343.10 L275.26,341.36 L272.61,339.45 L269.98,337.36 L267.38,335.10 L264.82,332.69 L262.30,330.12 L259.84,327.40 L257.43,324.55 L255.10,321.57 L252.83,318.46 L250.64,315.24 L248.53,311.91 L246.51,308.49 L244.59,304.97 L242.77,301.39 L241.06,297.73 L239.45,294.02 L237.96,290.25 L236.59,286.46 L235.34,282.63 L234.21,278.79 L233.22,274.94 L232.36,271.10 L231.63,267.27 L231.03,263.47 L230.58,259.71 L230.26,255.99 L230.08,252.33 L230.04,248.73 L230.15,245.22 L230.39,241.78 L230.77,238.45 L231.29,235.22 L231.95,232.10 L232.74,229.11 L233.67,226.24 L234.72,223.51 L235.91,220.93 L237.21,218.51 L238.64,216.24 L240.19,214.14 L241.84,212.21 L243.61,210.45 L245.48,208.88 L247.44,207.49 L249.50,206.30 L251.65,205.29 L359.80,159.09 L362.05,158.27 L364.39,157.65 L366.79,157.24 L369.25,157.03 L371.77,157.02 L374.34,157.21 L376.95,157.61 L379.60,158.21 L382.28,159.02 L384.97,160.02 L387.68,161.21 L390.40,162.60 L393.11,164.18 L395.81,165.94 L398.50,167.88 L401.16,170.00 L403.79,172.28 L406.39,174.73 L408.94,177.33 L411.43,180.08 L413.87,182.97 L416.24,185.99 L418.53,189.14 L420.75,192.40 L422.88,195.77 L424.93,199.24 L426.87,202.80 L428.72,206.43 L430.46,210.14 L432.08,213.90 L433.59,217.71 L434.98,221.56 L436.25,225.43 L437.39,229.32 L438.40,233.22 L439.27,237.11 L440.01,240.99 L440.61,244.84 L441.07,248.65 L441.39,252.42 L441.57,256.13 L441.61,259.77 L441.51,263.33 L441.26,266.81 L440.87,270.19 L440.35,273.46 L439.68,276.62 L438.88,279.65 L437.94,282.55 L436.87,285.31 L435.67,287.93 L434.35,290.39 L432.90,292.68 L431.34,294.81 L429.66,296.77 L427.87,298.54 L425.98,300.14 L423.99,301.54 L421.90,302.75 L419.73,303.77 Z" fill="url(#gB)"/><path d="M359.80,159.09 L362.05,158.27 L364.39,157.65 L366.79,157.24 L369.25,157.03 L371.77,157.02 L374.34,157.21 L376.95,157.61 L379.60,158.21 L382.28,159.02 L384.97,160.02 L387.68,161.21 L390.40,162.60 L393.11,164.18 L395.81,165.94 L398.50,167.88 L401.16,170.00 L403.79,172.28 L406.39,174.73 L408.94,177.33 L411.43,180.08 L413.87,182.97 L416.24,185.99 L418.53,189.14 L420.75,192.40 L422.88,195.77 L424.93,199.24 L426.87,202.80 L428.72,206.43 L430.46,210.14 L432.08,213.90 L433.59,217.71 L434.98,221.56 L436.25,225.43 L437.39,229.32 L438.40,233.22 L439.27,237.11 L440.01,240.99 L440.61,244.84 L441.07,248.65 L441.39,252.42 L441.57,256.13 L441.61,259.77 L441.51,263.33 L441.26,266.81 L440.87,270.19 L440.35,273.46 L439.68,276.62 L438.88,279.65 L437.94,282.55 L436.87,285.31 L435.67,287.93 L434.35,290.39 L432.90,292.68 L431.34,294.81 L429.66,296.77 L427.87,298.54 L425.98,300.14 L423.99,301.54 L421.90,302.75 L419.73,303.77" stroke="#303030" stroke-width="0.8" fill="none"/><path d="M310.81,348.13 L312.61,347.30 L314.34,346.35 L316.01,345.26 L317.62,344.04 L319.15,342.69 L320.62,341.21 L322.01,339.62 L323.32,337.90 L324.55,336.07 L325.70,334.12 L326.76,332.07 L327.74,329.91 L328.63,327.64 L329.42,325.28 L330.13,322.83 L330.75,320.29 L331.26,317.67 L331.69,314.97 L332.02,312.20 L332.25,309.36 L332.38,306.46 L332.42,303.50 L332.36,300.49 L332.20,297.43 L331.95,294.34 L331.60,291.21 L331.15,288.05 L330.61,284.87 L329.97,281.68 L329.24,278.48 L328.42,275.27 L327.51,272.07 L326.51,268.87 L325.43,265.70 L324.26,262.54 L323.01,259.41 L321.68,256.31 L320.27,253.25 L318.79,250.23 L317.24,247.27 L315.62,244.36 L313.93,241.51 L312.18,238.73 L310.37,236.02 L308.51,233.39 L306.59,230.84 L304.63,228.38 L302.62,226.02 L300.57,223.74 L298.49,221.57 L296.37,219.51 L294.22,217.55 L292.05,215.70 L289.85,213.97 L287.65,212.37 L285.42,210.88 L283.19,209.52 L280.96,208.28 L278.73,207.18 L276.50,206.21 L274.28,205.37 L272.08,204.67 L269.89,204.11 L267.72,203.68 L265.58,203.40 L263.47,203.25 L261.39,203.24 L259.35,203.37 L257.35,203.65 L255.40,204.06 L253.50,204.61 L251.65,205.29 L249.85,206.12 L248.12,207.07 L246.45,208.16 L244.84,209.38 L243.31,210.73 L241.84,212.21 L240.45,213.80 L239.14,215.52 L237.91,217.35 L236.76,219.30 L235.70,221.35 L234.72,223.51 L233.83,225.78 L233.04,228.14 L232.33,230.59 L231.71,233.13 L231.20,235.75 L230.77,238.45 L230.44,241.22 L230.21,244.06 L230.08,246.96 L230.04,249.92 L230.10,252.93 L230.26,255.99 L230.51,259.08 L230.86,262.21 L231.31,265.37 L231.85,268.55 L232.49,271.74 L233.22,274.94 L234.04,278.15 L234.95,281.35 L235.95,284.55 L237.03,287.73 L238.20,290.88 L239.45,294.02 L240.78,297.11 L242.19,300.17 L243.67,303.19 L245.22,306.15 L246.84,309.06 L248.53,311.91 L250.28,314.69 L252.09,317.40 L253.95,320.03 L255.87,322.58 L257.83,325.04 L259.84,327.40 L261.89,329.68 L263.97,331.85 L266.09,333.91 L268.24,335.87 L270.41,337.72 L272.61,339.45 L274.81,341.05 L277.04,342.54 L279.27,343.90 L281.50,345.14 L283.73,346.24 L285.96,347.21 L288.18,348.05 L290.38,348.75 L292.57,349.31 L294.74,349.74 L296.88,350.02 L298.99,350.17 L301.07,350.18 L303.11,350.05 L305.10,349.77 L307.06,349.36 L308.96,348.81 Z" fill="url(#gFl)" stroke="#303030" stroke-width="0.8"/><path d="M303.64,343.63 L305.28,342.88 L306.86,342.01 L308.38,341.01 L309.84,339.90 L311.24,338.67 L312.57,337.33 L313.84,335.88 L315.03,334.31 L316.15,332.64 L317.20,330.87 L318.17,329.00 L319.06,327.03 L319.87,324.97 L320.60,322.82 L321.24,320.59 L321.80,318.28 L322.27,315.89 L322.66,313.43 L322.96,310.91 L323.17,308.32 L323.29,305.68 L323.32,302.98 L323.27,300.24 L323.12,297.46 L322.89,294.64 L322.57,291.79 L322.17,288.91 L321.67,286.02 L321.09,283.11 L320.43,280.20 L319.68,277.28 L318.85,274.36 L317.94,271.45 L316.96,268.55 L315.89,265.68 L314.75,262.82 L313.54,260.00 L312.26,257.22 L310.91,254.47 L309.50,251.77 L308.02,249.12 L306.48,246.53 L304.89,244.00 L303.24,241.53 L301.55,239.13 L299.80,236.81 L298.01,234.57 L296.18,232.42 L294.32,230.35 L292.42,228.37 L290.49,226.49 L288.53,224.70 L286.55,223.02 L284.56,221.45 L282.55,219.98 L280.52,218.63 L278.49,217.39 L276.46,216.27 L274.42,215.26 L272.40,214.38 L270.37,213.62 L268.37,212.98 L266.37,212.46 L264.40,212.08 L262.45,211.82 L260.53,211.68 L258.64,211.67 L256.78,211.80 L254.96,212.04 L253.18,212.42 L251.45,212.92 L249.76,213.54 L248.13,214.29 L246.55,215.17 L245.03,216.16 L243.56,217.27 L242.17,218.50 L240.83,219.84 L239.57,221.29 L238.37,222.86 L237.25,224.53 L236.21,226.30 L235.24,228.17 L234.35,230.14 L233.54,232.20 L232.81,234.35 L232.17,236.58 L231.61,238.89 L231.13,241.28 L230.75,243.74 L230.45,246.26 L230.24,248.85 L230.12,251.49 L230.08,254.19 L230.14,256.93 L230.28,259.71 L230.51,262.53 L230.83,265.38 L231.24,268.26 L231.73,271.15 L232.31,274.06 L232.98,276.97 L233.72,279.89 L234.55,282.81 L235.46,285.72 L236.45,288.62 L237.51,291.49 L238.65,294.35 L239.87,297.17 L241.15,299.95 L242.50,302.70 L243.91,305.40 L245.39,308.05 L246.92,310.64 L248.52,313.17 L250.16,315.64 L251.86,318.04 L253.60,320.36 L255.39,322.60 L257.22,324.75 L259.09,326.82 L260.99,328.80 L262.92,330.68 L264.87,332.47 L266.85,334.15 L268.85,335.72 L270.86,337.19 L272.88,338.54 L274.91,339.78 L276.95,340.90 L278.98,341.91 L281.01,342.79 L283.03,343.55 L285.04,344.19 L287.03,344.71 L289.01,345.09 L290.96,345.36 L292.88,345.49 L294.77,345.50 L296.63,345.38 L298.45,345.13 L300.22,344.75 L301.96,344.25 Z" fill="#a0a0a0" stroke="#303030" stroke-width="0.8"/><path d="M293.73,319.70 L294.77,319.22 L295.77,318.67 L296.73,318.04 L297.66,317.34 L298.54,316.56 L299.39,315.71 L300.19,314.79 L300.95,313.80 L301.66,312.74 L302.32,311.62 L302.93,310.43 L303.50,309.19 L304.01,307.88 L304.47,306.52 L304.88,305.10 L305.23,303.64 L305.53,302.13 L305.78,300.57 L305.97,298.97 L306.10,297.33 L306.18,295.66 L306.20,293.95 L306.16,292.21 L306.07,290.45 L305.93,288.66 L305.72,286.86 L305.47,285.04 L305.15,283.20 L304.79,281.36 L304.37,279.51 L303.89,277.66 L303.37,275.82 L302.79,273.97 L302.17,272.14 L301.49,270.32 L300.77,268.51 L300.00,266.72 L299.19,264.96 L298.34,263.22 L297.44,261.50 L296.50,259.83 L295.53,258.18 L294.52,256.58 L293.48,255.02 L292.40,253.50 L291.30,252.03 L290.16,250.61 L289.01,249.24 L287.82,247.93 L286.62,246.68 L285.40,245.49 L284.16,244.36 L282.91,243.29 L281.64,242.30 L280.37,241.37 L279.08,240.51 L277.80,239.72 L276.51,239.01 L275.22,238.38 L273.94,237.82 L272.66,237.33 L271.38,236.93 L270.12,236.60 L268.87,236.36 L267.64,236.19 L266.42,236.11 L265.22,236.10 L264.04,236.18 L262.89,236.34 L261.76,236.57 L260.66,236.89 L259.60,237.29 L258.56,237.76 L257.56,238.31 L256.60,238.94 L255.67,239.65 L254.78,240.43 L253.94,241.28 L253.14,242.20 L252.38,243.19 L251.67,244.25 L251.01,245.37 L250.39,246.55 L249.83,247.80 L249.32,249.11 L248.86,250.47 L248.45,251.88 L248.10,253.35 L247.80,254.86 L247.55,256.42 L247.36,258.02 L247.23,259.66 L247.15,261.33 L247.13,263.04 L247.16,264.77 L247.26,266.54 L247.40,268.32 L247.60,270.13 L247.86,271.95 L248.18,273.78 L248.54,275.62 L248.96,277.47 L249.44,279.32 L249.96,281.17 L250.54,283.01 L251.16,284.85 L251.84,286.67 L252.56,288.48 L253.33,290.27 L254.14,292.03 L254.99,293.77 L255.89,295.48 L256.83,297.16 L257.80,298.80 L258.81,300.41 L259.85,301.97 L260.93,303.49 L262.03,304.96 L263.16,306.38 L264.32,307.74 L265.51,309.05 L266.71,310.31 L267.93,311.50 L269.17,312.63 L270.42,313.69 L271.69,314.69 L272.96,315.62 L274.24,316.48 L275.53,317.26 L276.82,317.97 L278.11,318.61 L279.39,319.17 L280.67,319.65 L281.95,320.06 L283.21,320.38 L284.46,320.63 L285.69,320.79 L286.91,320.88 L288.11,320.88 L289.29,320.81 L290.44,320.65 L291.57,320.41 L292.66,320.09 Z" fill="#9e9e9e" stroke="#303030" stroke-width="0.8"/><path d="M285.94,318.92 L286.86,318.50 L287.74,318.01 L288.60,317.45 L289.42,316.83 L290.20,316.14 L290.95,315.39 L291.66,314.57 L292.33,313.69 L292.96,312.76 L293.55,311.76 L294.09,310.71 L294.59,309.61 L295.04,308.45 L295.45,307.25 L295.81,306.00 L296.13,304.70 L296.39,303.36 L296.61,301.98 L296.78,300.56 L296.90,299.11 L296.96,297.63 L296.98,296.11 L296.95,294.58 L296.87,293.02 L296.74,291.43 L296.56,289.84 L296.33,288.22 L296.06,286.60 L295.73,284.97 L295.36,283.33 L294.94,281.69 L294.47,280.06 L293.96,278.42 L293.41,276.80 L292.81,275.18 L292.17,273.58 L291.49,272.00 L290.78,270.44 L290.02,268.90 L289.22,267.38 L288.40,265.90 L287.53,264.44 L286.64,263.02 L285.72,261.64 L284.76,260.29 L283.79,258.99 L282.78,257.73 L281.76,256.52 L280.71,255.36 L279.64,254.25 L278.56,253.20 L277.46,252.20 L276.35,251.25 L275.23,250.37 L274.10,249.55 L272.97,248.79 L271.83,248.09 L270.69,247.46 L269.55,246.90 L268.41,246.40 L267.28,245.97 L266.15,245.62 L265.03,245.33 L263.92,245.11 L262.83,244.96 L261.75,244.89 L260.69,244.88 L259.65,244.95 L258.63,245.09 L257.63,245.30 L256.66,245.58 L255.71,245.93 L254.79,246.35 L253.91,246.84 L253.05,247.40 L252.23,248.02 L251.45,248.71 L250.70,249.47 L249.99,250.28 L249.32,251.16 L248.69,252.10 L248.10,253.09 L247.56,254.14 L247.06,255.24 L246.61,256.40 L246.20,257.61 L245.84,258.86 L245.52,260.16 L245.26,261.50 L245.04,262.88 L244.87,264.29 L244.76,265.74 L244.69,267.23 L244.67,268.74 L244.70,270.28 L244.78,271.84 L244.91,273.42 L245.09,275.02 L245.32,276.63 L245.59,278.25 L245.92,279.89 L246.29,281.52 L246.71,283.16 L247.18,284.80 L247.69,286.43 L248.24,288.06 L248.84,289.67 L249.48,291.27 L250.16,292.85 L250.88,294.42 L251.63,295.96 L252.43,297.47 L253.25,298.96 L254.12,300.41 L255.01,301.83 L255.93,303.22 L256.89,304.56 L257.87,305.86 L258.87,307.12 L259.90,308.33 L260.94,309.49 L262.01,310.60 L263.09,311.66 L264.19,312.66 L265.30,313.60 L266.42,314.48 L267.55,315.31 L268.68,316.07 L269.82,316.76 L270.96,317.39 L272.10,317.96 L273.24,318.45 L274.38,318.88 L275.50,319.24 L276.62,319.53 L277.73,319.74 L278.82,319.89 L279.90,319.97 L280.96,319.97 L282.00,319.90 L283.03,319.76 L284.02,319.55 L285.00,319.27 Z" fill="url(#gC)" stroke="#303030" stroke-width="0.8"/><path d="M236.01,337.65 L234.89,338.06 L233.74,338.36 L232.56,338.57 L231.34,338.67 L230.09,338.68 L228.82,338.58 L227.53,338.38 L226.22,338.09 L224.90,337.69 L223.57,337.20 L222.23,336.60 L220.89,335.92 L219.55,335.14 L218.21,334.27 L216.88,333.31 L215.57,332.26 L214.27,331.13 L212.98,329.92 L211.72,328.64 L210.49,327.28 L209.29,325.85 L208.12,324.36 L206.98,322.80 L205.88,321.19 L204.83,319.52 L203.82,317.81 L202.86,316.05 L201.95,314.25 L201.09,312.42 L200.28,310.56 L199.54,308.68 L198.85,306.78 L198.22,304.86 L197.66,302.94 L197.16,301.01 L196.73,299.09 L196.37,297.18 L196.07,295.27 L195.84,293.39 L195.68,291.53 L195.59,289.69 L195.57,287.89 L195.62,286.13 L195.75,284.41 L195.94,282.74 L196.20,281.13 L196.53,279.57 L196.92,278.07 L197.39,276.63 L197.92,275.27 L198.51,273.98 L199.16,272.76 L199.88,271.63 L200.65,270.57 L201.48,269.61 L202.37,268.73 L203.30,267.94 L204.28,267.25 L205.32,266.65 L206.39,266.15 L249.81,248.16 L250.93,247.76 L252.08,247.45 L253.27,247.24 L254.48,247.14 L255.73,247.14 L257.00,247.23 L258.29,247.43 L259.60,247.73 L260.92,248.12 L262.25,248.62 L263.59,249.21 L264.94,249.90 L266.28,250.68 L267.61,251.55 L268.94,252.51 L270.26,253.55 L271.56,254.68 L272.84,255.89 L274.10,257.17 L275.33,258.53 L276.54,259.96 L277.71,261.46 L278.84,263.01 L279.94,264.63 L280.99,266.29 L282.00,268.01 L282.96,269.76 L283.88,271.56 L284.73,273.39 L285.54,275.25 L286.28,277.13 L286.97,279.03 L287.60,280.95 L288.16,282.87 L288.66,284.80 L289.09,286.72 L289.46,288.64 L289.75,290.54 L289.98,292.43 L290.14,294.29 L290.23,296.12 L290.25,297.92 L290.20,299.68 L290.08,301.40 L289.88,303.07 L289.62,304.69 L289.29,306.25 L288.90,307.75 L288.43,309.18 L287.91,310.55 L287.31,311.84 L286.66,313.05 L285.94,314.19 L285.17,315.24 L284.34,316.21 L283.46,317.09 L282.52,317.87 L281.54,318.57 L280.51,319.17 L279.43,319.67 Z" fill="url(#gF)"/><path d="M236.01,337.65 L236.91,337.24 L237.78,336.76 L238.61,336.22 L239.42,335.61 L240.19,334.93 L240.92,334.19 L241.61,333.39 L242.27,332.53 L242.89,331.62 L243.46,330.64 L243.99,329.61 L244.48,328.53 L244.93,327.40 L245.33,326.22 L245.68,324.99 L245.99,323.72 L246.25,322.41 L246.46,321.06 L246.63,319.67 L246.74,318.25 L246.81,316.79 L246.83,315.31 L246.80,313.80 L246.72,312.27 L246.59,310.72 L246.42,309.16 L246.19,307.58 L245.92,305.99 L245.60,304.39 L245.24,302.79 L244.83,301.18 L244.37,299.58 L243.87,297.98 L243.33,296.39 L242.74,294.80 L242.12,293.24 L241.45,291.68 L240.75,290.15 L240.00,288.64 L239.23,287.16 L238.41,285.70 L237.57,284.28 L236.69,282.89 L235.79,281.53 L234.86,280.21 L233.90,278.94 L232.91,277.71 L231.91,276.52 L230.88,275.38 L229.84,274.30 L228.78,273.26 L227.70,272.28 L226.62,271.36 L225.52,270.49 L224.41,269.69 L223.30,268.94 L222.18,268.26 L221.07,267.64 L219.95,267.09 L218.83,266.60 L217.72,266.19 L216.62,265.83 L215.52,265.55 L214.44,265.34 L213.37,265.20 L212.31,265.12 L211.27,265.12 L210.25,265.18 L209.25,265.32 L208.27,265.53 L207.32,265.80 L206.39,266.15 L205.49,266.56 L204.62,267.04 L203.79,267.58 L202.98,268.19 L202.21,268.87 L201.48,269.61 L200.79,270.41 L200.13,271.27 L199.51,272.18 L198.94,273.16 L198.41,274.19 L197.92,275.27 L197.47,276.40 L197.07,277.58 L196.72,278.81 L196.41,280.08 L196.15,281.39 L195.94,282.74 L195.77,284.13 L195.66,285.55 L195.59,287.01 L195.57,288.49 L195.60,290.00 L195.68,291.53 L195.81,293.08 L195.98,294.64 L196.21,296.22 L196.48,297.81 L196.80,299.41 L197.16,301.01 L197.57,302.62 L198.03,304.22 L198.53,305.82 L199.07,307.41 L199.66,309.00 L200.28,310.56 L200.95,312.12 L201.65,313.65 L202.40,315.16 L203.17,316.64 L203.99,318.10 L204.83,319.52 L205.71,320.91 L206.61,322.27 L207.54,323.59 L208.50,324.86 L209.49,326.09 L210.49,327.28 L211.52,328.42 L212.56,329.50 L213.62,330.54 L214.70,331.52 L215.78,332.44 L216.88,333.31 L217.99,334.11 L219.10,334.86 L220.22,335.54 L221.33,336.16 L222.45,336.71 L223.57,337.20 L224.68,337.61 L225.78,337.97 L226.88,338.25 L227.96,338.46 L229.03,338.60 L230.09,338.68 L231.13,338.68 L232.15,338.62 L233.15,338.48 L234.13,338.27 L235.08,338.00 Z" fill="url(#gCh)" stroke="#303030" stroke-width="0.8"/><path d="M230.43,333.58 L231.17,333.24 L231.89,332.84 L232.59,332.39 L233.25,331.88 L233.89,331.32 L234.50,330.71 L235.07,330.05 L235.62,329.33 L236.13,328.57 L236.61,327.77 L237.05,326.91 L237.45,326.01 L237.82,325.08 L238.16,324.10 L238.45,323.08 L238.70,322.02 L238.92,320.93 L239.10,319.81 L239.23,318.66 L239.33,317.48 L239.38,316.28 L239.40,315.05 L239.37,313.80 L239.31,312.53 L239.20,311.24 L239.06,309.94 L238.87,308.63 L238.65,307.31 L238.38,305.99 L238.08,304.66 L237.74,303.33 L237.36,302.00 L236.95,300.67 L236.50,299.35 L236.01,298.04 L235.49,296.74 L234.94,295.45 L234.35,294.18 L233.74,292.93 L233.09,291.70 L232.42,290.49 L231.72,289.31 L230.99,288.15 L230.24,287.03 L229.47,285.94 L228.67,284.88 L227.86,283.86 L227.02,282.87 L226.17,281.93 L225.31,281.03 L224.43,280.17 L223.54,279.36 L222.63,278.59 L221.72,277.87 L220.81,277.20 L219.88,276.59 L218.96,276.02 L218.03,275.51 L217.10,275.05 L216.18,274.65 L215.26,274.30 L214.34,274.01 L213.43,273.78 L212.53,273.60 L211.64,273.48 L210.77,273.42 L209.90,273.42 L209.06,273.47 L208.23,273.58 L207.42,273.75 L206.63,273.98 L205.86,274.27 L205.11,274.61 L204.39,275.01 L203.70,275.46 L203.03,275.97 L202.39,276.53 L201.79,277.14 L201.21,277.80 L200.66,278.51 L200.15,279.28 L199.68,280.08 L199.23,280.94 L198.83,281.83 L198.46,282.77 L198.13,283.75 L197.83,284.77 L197.58,285.83 L197.36,286.91 L197.19,288.04 L197.05,289.19 L196.96,290.37 L196.90,291.57 L196.88,292.80 L196.91,294.05 L196.98,295.32 L197.08,296.60 L197.23,297.90 L197.41,299.21 L197.64,300.53 L197.90,301.86 L198.20,303.19 L198.55,304.52 L198.92,305.85 L199.34,307.18 L199.79,308.50 L200.27,309.81 L200.79,311.11 L201.35,312.40 L201.93,313.67 L202.54,314.92 L203.19,316.15 L203.86,317.36 L204.56,318.54 L205.29,319.70 L206.04,320.82 L206.81,321.91 L207.61,322.97 L208.43,323.99 L209.26,324.98 L210.11,325.92 L210.98,326.82 L211.86,327.68 L212.75,328.49 L213.65,329.26 L214.56,329.98 L215.48,330.64 L216.40,331.26 L217.33,331.83 L218.25,332.34 L219.18,332.80 L220.11,333.20 L221.03,333.55 L221.94,333.84 L222.85,334.07 L223.75,334.25 L224.64,334.37 L225.52,334.43 L226.38,334.43 L227.23,334.38 L228.06,334.27 L228.87,334.09 L229.66,333.87 Z" fill="#9c9c9c" stroke="#303030" stroke-width="0.8"/></g></svg>
<div class="r" style="left:567px;top:78px;width:164px;height:354px;background:#444b5a;box-sizing:border-box;border:1px solid #2a2f38;"></div>
<div class="r" style="left:568px;top:107.2px;width:162px;height:1px;background:#585f6d;"></div>
<div class="r" style="left:568px;top:213.2px;width:162px;height:1px;background:#585f6d;"></div>
<div class="r" style="left:568px;top:242.2px;width:162px;height:1px;background:#585f6d;"></div>
<div class="r" style="left:568px;top:297.1px;width:162px;height:1px;background:#585f6d;"></div>
<div class="r" style="left:568px;top:377.5px;width:162px;height:1px;background:#585f6d;"></div>
<div class="r" style="left:568px;top:351.2px;width:162px;height:24.8px;background:#394150;"></div>
<svg class="r" style="left:570px;top:82px" width="22" height="22" viewBox="0 0 22 22"><rect x="6.5" y="0.5" width="15" height="15.5" fill="#dcdcdc" stroke="#f6f6f6" stroke-width="1"/><rect x="1" y="5.5" width="15.5" height="15.5" fill="#f2a56f"/><rect x="6.5" y="5.5" width="10" height="10.5" fill="#f2cdb0"/></svg>
<div class="t" style="left:592.8px;top:86.8px;font-size:9.0px;transform:scaleX(0.83);color:#e6e6e6;">Plane</div>
<svg class="r" style="left:570px;top:111px" width="22" height="22" viewBox="0 0 22 22"><path d="M1.5,5 l5.5,-3.5 h6 l-5.5,3.5z" fill="#d4d4d4"/><rect x="1.5" y="5" width="6" height="15" fill="#ececec"/><path d="M7.5,5 l5.5,-3.5 v15 l-5.5,3.5z" fill="#6fd08a"/><path d="M14.5,6 l6.5,-4.5 v14 l-6.5,4.5z" fill="#f2a56f"/></svg>
<div class="t" style="left:592.8px;top:115.6px;font-size:9.0px;transform:scaleX(0.83);color:#e6e6e6;">Offset from Plane</div>
<svg class="r" style="left:570px;top:137px" width="22" height="22" viewBox="0 0 22 22"><path d="M1.5,5 l5.5,-3.5 h6 l-5.5,3.5z" fill="#d4d4d4"/><rect x="1.5" y="5" width="6" height="15" fill="#ececec"/><path d="M7.5,5 l5.5,-3.5 v15 l-5.5,3.5z" fill="#6fd08a"/><path d="M14.5,6 l6.5,-4.5 v14 l-6.5,4.5z" fill="#f2a56f"/><rect x="16.3" y="9.5" width="2.8" height="2.8" fill="#6fd08a" stroke="#2a5a3a" stroke-width="0.6"/></svg>
<div class="t" style="left:592.8px;top:141.3px;font-size:9.0px;transform:scaleX(0.83);color:#e6e6e6;">Parallel to Plane through Point</div>
<svg class="r" style="left:570px;top:162px" width="22" height="22" viewBox="0 0 22 22"><path d="M2,16 l4,-11 l4,-2 v13 l-4,3z" fill="#6fd08a"/><path d="M6,5 l4,-2 v13 l-4,3z" fill="#c8c8c8"/><path d="M10,3 l3,-2 v14 l-3,3z" fill="#f2a56f"/><path d="M13,1 l4,3 l3,12 l-4,-1z" fill="#b8b8b8"/><path d="M16,5 l4,11 l-3,2z" fill="#6fd08a"/></svg>
<div class="t" style="left:592.8px;top:167.0px;font-size:9.0px;transform:scaleX(0.83);color:#e6e6e6;">Midplane between Two Planes</div>
<svg class="r" style="left:570px;top:188px" width="22" height="22" viewBox="0 0 22 22"><rect x="0.5" y="0" width="20" height="21" fill="#f2a56f"/><circle cx="10.5" cy="10.5" r="8.2" fill="#6fd08a"/><circle cx="10.5" cy="10.5" r="3.8" fill="#f2a56f"/><circle cx="10.5" cy="10.5" r="6.5" fill="none" stroke="#9fe6b4" stroke-width="1"/></svg>
<div class="t" style="left:592.8px;top:192.7px;font-size:9.0px;transform:scaleX(0.83);color:#e6e6e6;">Midplane of Torus</div>
<svg class="r" style="left:570px;top:217px" width="22" height="22" viewBox="0 0 22 22"><path d="M3,10 l9,-9 l9,9 l-9,9z" fill="#f2a56f"/><path d="M1,12 l3,-3 h5 v11 h-8z" fill="#e8e8e8"/><path d="M9,12 l3,-3 v8 l-3,3z" fill="#bdbdbd"/><path d="M12,9 l5,-5 v6 l-5,7z" fill="#2f8f4e"/></svg>
<div class="t" style="left:592.8px;top:221.8px;font-size:9.0px;transform:scaleX(0.83);color:#e6e6e6;">Angle to Plane around Edge</div>
<svg class="r" style="left:570px;top:246px" width="22" height="22" viewBox="0 0 22 22"><path d="M2,7 l13,-5 l5,13 l-13,5z" fill="#f2a56f"/><path d="M7,8 l3,-2 h4 v7 l-3,2 h-4z" fill="#e8e8e8"/><path d="M7,8 h4 v7 h-4z" fill="#d0d0d0"/><circle cx="4" cy="10" r="1.5" fill="#6fd08a"/><circle cx="15" cy="5" r="1.5" fill="#6fd08a"/><circle cx="9" cy="17" r="1.5" fill="#6fd08a"/></svg>
<div class="t" style="left:592.8px;top:251.0px;font-size:9.0px;transform:scaleX(0.83);color:#e6e6e6;">Three Points</div>
<svg class="r" style="left:570px;top:272px" width="22" height="22" viewBox="0 0 22 22"><path d="M1,11 l10,-10 l10,10 l-10,10z" fill="#f2a56f"/><path d="M7,9 l4,-3 l5,2 v6 l-5,3 l-4,-2z" fill="#e8e8e8"/><path d="M11,11 l5,-3 v6 l-5,3z" fill="#bdbdbd"/><path d="M7,15 l4,2 M16,8 v6" stroke="#6fd08a" stroke-width="1.2"/></svg>
<div class="t" style="left:592.8px;top:276.7px;font-size:9.0px;transform:scaleX(0.83);color:#e6e6e6;">Two Coplanar Edges</div>
<svg class="r" style="left:570px;top:301px" width="22" height="22" viewBox="0 0 22 22"><path d="M11,21 v-13 l9,-8 v13z" fill="#f2a56f"/><path d="M2,13 l11,-9 a4.5,4.5 0 0 1 5,6 l-11,9z" fill="#6fd08a"/><circle cx="6" cy="15.5" r="4.6" fill="#eeeeee" stroke="#7ad69a" stroke-width="1.2"/></svg>
<div class="t" style="left:592.8px;top:305.7px;font-size:9.0px;transform:scaleX(0.83);color:#e6e6e6;">Tangent to Surface through Edge</div>
<svg class="r" style="left:570px;top:327px" width="22" height="22" viewBox="0 0 22 22"><path d="M11,21 v-13 l9,-8 v13z" fill="#f2a56f"/><path d="M2,13 l11,-9 a4.5,4.5 0 0 1 5,6 l-11,9z" fill="#6fd08a"/><circle cx="6" cy="15.5" r="4.6" fill="#eeeeee" stroke="#7ad69a" stroke-width="1.2"/><rect x="6.5" y="14" width="2.8" height="2.8" fill="#2f8f4e"/></svg>
<div class="t" style="left:592.8px;top:331.5px;font-size:9.0px;transform:scaleX(0.83);color:#e6e6e6;">Tangent to Surface through Point</div>
<svg class="r" style="left:570px;top:353px" width="22" height="22" viewBox="0 0 22 22"><path d="M13,8 l7,-7 v13 l-7,7z" fill="#f2a56f"/><path d="M1,5 l4,-4 h7 v14 l-4,4 h-7z" fill="#6fd08a"/><path d="M1,5 h7 v14 h-7z" fill="#ececec"/><path d="M3,6 l3,-3 h5 v1 l-3,3 h-5z" fill="#f4f4f4"/><path d="M8,5 l4,-4 v14 l-4,4z" fill="#c8c8c8"/></svg>
<div class="t" style="left:592.8px;top:357.3px;font-size:9.0px;transform:scaleX(0.83);color:#e6e6e6;">Tangent to Surface and Parallel to Plane</div>
<svg class="r" style="left:570px;top:382px" width="22" height="22" viewBox="0 0 22 22"><path d="M1,5 l3,-3 h9 v14 l-3,3 h-9z" fill="#bdbdbd"/><path d="M1,5 h9 v14 h-9z" fill="#ececec"/><path d="M1,5 l3,-3 h9 l-3,3z" fill="#2f8f4e"/><path d="M16,8 l5,-6 v14 l-5,6z" fill="#f2a56f"/><rect x="17" y="9.5" width="2.8" height="2.8" fill="#6fd08a" stroke="#2a5a3a" stroke-width="0.5"/></svg>
<div class="t" style="left:592.8px;top:386.2px;font-size:9.0px;transform:scaleX(0.83);color:#e6e6e6;">Normal to Axis through Point</div>
<svg class="r" style="left:570px;top:408px" width="22" height="22" viewBox="0 0 22 22"><path d="M1,6 l15,-6 v14 l-15,7z" fill="#f2a56f"/><rect x="5" y="9" width="3" height="3" fill="#6fd08a" stroke="#2a5a3a" stroke-width="0.5"/><path d="M7,11 l13,8" stroke="#e8e8e8" stroke-width="1.2"/></svg>
<div class="t" style="left:592.8px;top:412.0px;font-size:9.0px;transform:scaleX(0.83);color:#e6e6e6;">Normal to Curve at Point</div>
</body></html>
